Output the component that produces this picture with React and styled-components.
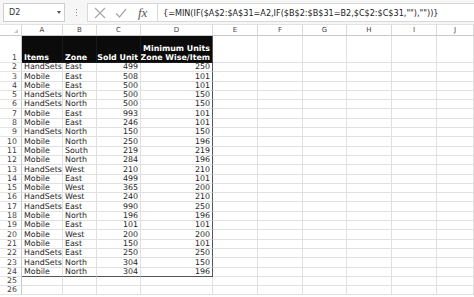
import React from 'react'
import styled, { createGlobalStyle } from 'styled-components'

const Global = createGlobalStyle`
  html, body { margin: 0; padding: 0; background: #fff; overflow: hidden; }
  body { font-family: "DejaVu Sans", Verdana, sans-serif; }
`

const Page = styled.div`
  width: 474px;
  height: 297px;
  overflow: hidden;
  background: #fff;
`

const FormulaBar = styled.div`
  display: flex;
  align-items: center;
  height: 25px;
  background: #f6f6f6;
  border-bottom: 1px solid #e2e2e2;
  box-sizing: border-box;
  padding: 3px 0 2px 3px;
`

const NameBox = styled.div`
  width: 62px;
  height: 19px;
  box-sizing: border-box;
  border: 1px solid #cfcfcf;
  background: #fff;
  display: flex;
  align-items: center;
  justify-content: space-between;
  padding: 0 3px 0 5px;
  font-size: 8px;
  color: #333;
`

const Arrow = styled.span`
  width: 0;
  height: 0;
  border-left: 2px solid transparent;
  border-right: 2px solid transparent;
  border-top: 3px solid #555;
`

const Dots = styled.div`
  width: 22px;
  display: flex;
  flex-direction: column;
  align-items: center;
  gap: 2px;
  span { width: 1px; height: 1px; background: #888; }
`

const IconBox = styled.div`
  width: 70px;
  height: 19px;
  box-sizing: border-box;
  border: 1px solid #d8d8d8;
  border-right: none;
  background: #fff;
  display: flex;
  align-items: center;
  padding-left: 6px;
  gap: 9px;
  color: #b0b0b0;
`

const Fx = styled.span`
  font-family: "Liberation Serif", serif;
  font-style: italic;
  font-size: 13px;
  color: #555;
  margin-left: 2px;
`

const FormulaInput = styled.div`
  flex: 1;
  height: 19px;
  box-sizing: border-box;
  border: 1px solid #d8d8d8;
  border-right: none;
  background: #fff;
  display: flex;
  align-items: center;
  padding-left: 5px;
  font-size: 8.1px;
  color: #1a1a1a;
  white-space: nowrap;
`

const Sheet = styled.div`
  display: grid;
  grid-template-columns: 22px 41px 34px 44px 72px 45px 45px 44px 45px 45px 37px;
  grid-template-rows: 11px 27px repeat(25, 9.3px);
`

const ColHead = styled.div`
  background: #fff;
  border-right: 1px solid #d8d8d8;
  border-bottom: 1px solid #c8c8c8;
  box-sizing: border-box;
  font-size: 7px;
  color: #444;
  display: flex;
  align-items: center;
  justify-content: center;
  line-height: 1;
`

const Corner = styled(ColHead)`
  justify-content: flex-end;
  align-items: flex-end;
  padding: 0 3px 2px 0;
  &::after {
    content: '';
    width: 0;
    height: 0;
    border-left: 4px solid transparent;
    border-bottom: 4px solid #c8c8c8;
  }
`

const RowHead = styled.div`
  background: #fff;
  border-right: 1px solid #c8c8c8;
  border-bottom: 1px solid #e4e4e4;
  box-sizing: border-box;
  font-size: 7.8px;
  color: #444;
  display: flex;
  align-items: flex-end;
  justify-content: flex-end;
  padding-right: 4px;
  line-height: 9px;
`

const edge = (p, side) => {
  if (side) return '#555'
  return p.$head ? '#1a1a1a' : '#e0e0e0'
}

const Cell = styled.div`
  box-sizing: border-box;
  border-right: 1px solid ${p => edge(p, p.$edgeRight)};
  border-bottom: 1px solid ${p => edge(p, p.$edgeBottom)};
  background: ${p => (p.$head ? '#0b0b0b' : '#fff')};
  color: ${p => (p.$head ? '#fff' : '#1e1e1e')};
  font-weight: ${p => (p.$head ? 'bold' : 'normal')};
  font-size: 7.9px;
  line-height: 9px;
  display: flex;
  flex-direction: column;
  justify-content: flex-end;
  align-items: ${p => (p.$num ? 'flex-end' : 'flex-start')};
  text-align: ${p => (p.$num ? 'right' : 'left')};
  padding: 0 2px 0 2px;
  white-space: nowrap;
  overflow: hidden;
`

const letters = ['A', 'B', 'C', 'D', 'E', 'F', 'G', 'H', 'I', 'J']

const data = [
  ['HandSets', 'East', 499, 250],
  ['Mobile', 'East', 508, 101],
  ['Mobile', 'East', 500, 101],
  ['HandSets', 'North', 500, 150],
  ['HandSets', 'North', 500, 150],
  ['Mobile', 'East', 993, 101],
  ['Mobile', 'East', 246, 101],
  ['HandSets', 'North', 150, 150],
  ['Mobile', 'North', 250, 196],
  ['Mobile', 'South', 219, 219],
  ['Mobile', 'North', 284, 196],
  ['HandSets', 'West', 210, 210],
  ['Mobile', 'East', 499, 101],
  ['Mobile', 'West', 365, 200],
  ['HandSets', 'West', 240, 210],
  ['HandSets', 'East', 990, 250],
  ['Mobile', 'North', 196, 196],
  ['Mobile', 'East', 101, 101],
  ['Mobile', 'West', 200, 200],
  ['Mobile', 'East', 150, 101],
  ['HandSets', 'East', 250, 250],
  ['HandSets', 'North', 304, 150],
  ['Mobile', 'North', 304, 196],
]

const CrossIcon = () => (
  <svg width="12" height="12" viewBox="0 0 12 12">
    <path d="M1 1L11 11M11 1L1 11" stroke="#a8a8a8" strokeWidth="1.2" fill="none" />
  </svg>
)

const CheckIcon = () => (
  <svg width="12" height="12" viewBox="0 0 12 12">
    <path d="M1 6.5L4.5 10L11 2" stroke="#a8a8a8" strokeWidth="1.2" fill="none" />
  </svg>
)

const emptyCells = key => letters.slice(4).map(l => <Cell key={`${key}-${l}`} />)

const App = () => {
  const rows = []
  // header row 1
  rows.push(<RowHead key="r1">1</RowHead>)
  rows.push(<Cell key="h1" $head>Items</Cell>)
  rows.push(<Cell key="h2" $head>Zone</Cell>)
  rows.push(<Cell key="h3" $head $num>Sold Unit</Cell>)
  rows.push(
    <Cell key="h4" $head $num $edgeRight>
      <span>Minimum Units</span>
      <span>Zone Wise/Item</span>
    </Cell>
  )
  rows.push(...emptyCells('r1'))

  data.forEach((d, i) => {
    const n = i + 2
    const last = n === 24
    rows.push(<RowHead key={`r${n}`}>{n}</RowHead>)
    rows.push(<Cell key={`a${n}`} $edgeBottom={last}>{d[0]}</Cell>)
    rows.push(<Cell key={`b${n}`} $edgeBottom={last}>{d[1]}</Cell>)
    rows.push(<Cell key={`c${n}`} $num $edgeBottom={last}>{d[2]}</Cell>)
    rows.push(<Cell key={`d${n}`} $num $edgeRight $edgeBottom={last}>{d[3]}</Cell>)
    rows.push(...emptyCells(`r${n}`))
  })

  ;[25, 26].forEach(n => {
    rows.push(<RowHead key={`r${n}`}>{n}</RowHead>)
    letters.forEach(l => rows.push(<Cell key={`${l}${n}`} />))
  })

  return (
    <Page>
      <Global />
      <FormulaBar>
        <NameBox>
          D2
          <Arrow />
        </NameBox>
        <Dots>
          <span />
          <span />
          <span />
        </Dots>
        <IconBox>
          <CrossIcon />
          <CheckIcon />
          <Fx>fx</Fx>
        </IconBox>
        <FormulaInput>{'{=MIN(IF($A$2:$A$31=A2,IF($B$2:$B$31=B2,$C$2:$C$31,""),""))}'}</FormulaInput>
      </FormulaBar>
      <Sheet>
        <Corner />
        {letters.map(l => (
          <ColHead key={l}>{l}</ColHead>
        ))}
        {rows}
      </Sheet>
    </Page>
  )
}

export default App
